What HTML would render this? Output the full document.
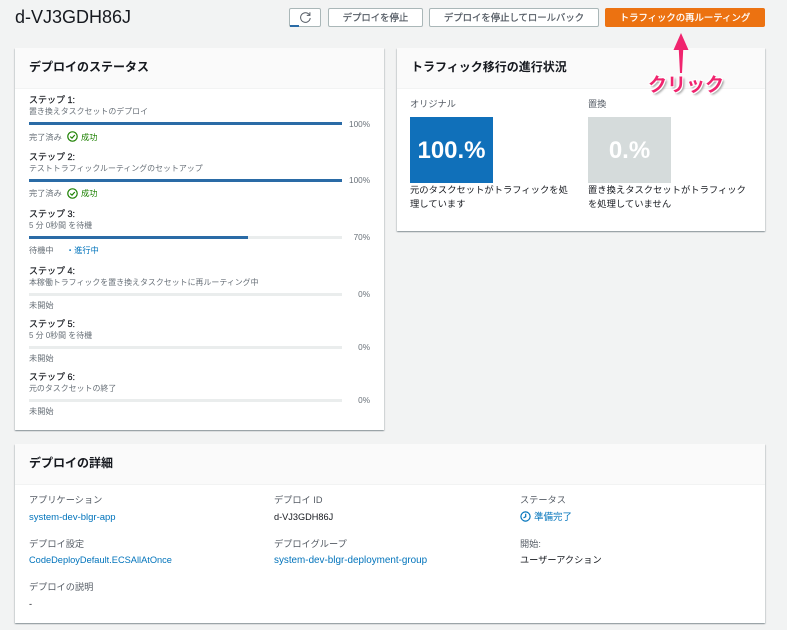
<!DOCTYPE html>
<html lang="ja"><head><meta charset="utf-8"><style>
html,body{margin:0;padding:0;background:#f2f3f3}
body{width:787px;height:630px;position:relative;overflow:hidden;font-family:"Liberation Sans","Noto Sans CJK JP",sans-serif;color:#16191f}
.t{position:absolute;white-space:nowrap;line-height:1.2}
.card{position:absolute;background:#fff;box-shadow:0 1px 1px 0 rgba(0,28,36,.3),1px 1px 1px 0 rgba(0,28,36,.1),-1px 1px 1px 0 rgba(0,28,36,.1)}
.hd{position:absolute;left:0;right:0;top:0;height:40px;background:#fafafa;border-bottom:1px solid #f2f3f3}
.btn{position:absolute;top:8px;height:17px;background:#fff;border:1px solid #aab7b8;border-radius:2px;font-size:9.4px;color:#545b64;text-align:center;line-height:18px;-webkit-text-stroke:.25px #545b64}
.s{font-size:9px;color:#16191f;-webkit-text-stroke:.2px #16191f}
.d{font-size:7.95px;color:#687078}
.l{font-size:8.2px;color:#687078}
.bar{position:absolute;left:29px;width:313px;height:3px;background:#eaeded}
.bar i{display:block;height:3px;background:#2a6ba6}
.p{font-size:8.2px;color:#687078;text-align:right;width:40px}
.g{font-size:8.2px;color:#1d8102}
.k{font-size:9.2px;color:#545b64}
.v{font-size:9.2px;color:#16191f}
.a{font-size:9.5px;color:#0073bb}
.h{font-size:12px;font-weight:700}
</style></head><body>
<div class="t" style="left:15px;top:7px;font-size:18px;color:#16191f">d-VJ3GDH86J</div>
<div class="btn" style="left:289px;width:30px"></div>
<div style="position:absolute;left:290px;top:25px;width:9px;height:2px;background:#2a6ba6"></div>
<svg style="position:absolute;left:299px;top:11px" width="13" height="13" viewBox="0 0 13 13" fill="none" stroke="#545b64" stroke-width="1"><path d="M10.6 4.2A4.8 4.8 0 1 0 11.2 7"/><path d="M10.9 1.2V4.4H7.8"/></svg>
<div class="btn" style="left:328px;width:93px">デプロイを停止</div>
<div class="btn" style="left:429px;width:168px">デプロイを停止してロールバック</div>
<div class="btn" style="left:605px;width:160px;height:19px;line-height:20px;background:#ec7211;border:0;color:#fff;-webkit-text-stroke:.25px #fff">トラフィックの再ルーティング</div>

<div class="card" style="left:15px;top:48px;width:369px;height:382px"><div class="hd"></div></div>
<div class="card" style="left:397px;top:48px;width:368px;height:183px"><div class="hd"></div></div>
<div class="card" style="left:15px;top:444px;width:750px;height:179px"><div class="hd"></div></div>

<div class="t h" style="left:29px;top:60px">デプロイのステータス</div>
<div class="t h" style="left:411px;top:60px">トラフィック移行の進行状況</div>
<div class="t h" style="left:29px;top:456px">デプロイの詳細</div>

<div class="t s" style="left:29px;top:95px">ステップ 1:</div>
<div class="t d" style="left:29px;top:107px">置き換えタスクセットのデプロイ</div>
<div class="bar" style="top:122px"><i style="width:100%"></i></div>
<div class="t p" style="left:330px;top:120px">100%</div>
<div class="t l" style="left:29px;top:133px">完了済み</div>
<svg style="position:absolute;left:67px;top:131px" width="11" height="11" viewBox="0 0 11 11" fill="none" stroke="#1d8102" stroke-width="1.2"><circle cx="5.5" cy="5.5" r="4.7"/><path d="M3.2 5.6L5 7.2L7.8 4"/></svg>
<div class="t g" style="left:81px;top:133px">成功</div>

<div class="t s" style="left:29px;top:152px">ステップ 2:</div>
<div class="t d" style="left:29px;top:164px">テストトラフィックルーティングのセットアップ</div>
<div class="bar" style="top:179px"><i style="width:100%"></i></div>
<div class="t p" style="left:330px;top:176px">100%</div>
<div class="t l" style="left:29px;top:189px">完了済み</div>
<svg style="position:absolute;left:67px;top:188px" width="11" height="11" viewBox="0 0 11 11" fill="none" stroke="#1d8102" stroke-width="1.2"><circle cx="5.5" cy="5.5" r="4.7"/><path d="M3.2 5.6L5 7.2L7.8 4"/></svg>
<div class="t g" style="left:81px;top:189px">成功</div>

<div class="t s" style="left:29px;top:209px">ステップ 3:</div>
<div class="t d" style="left:29px;top:221px">5 分 0秒間 を待機</div>
<div class="bar" style="top:236px"><i style="width:70%"></i></div>
<div class="t p" style="left:330px;top:233px">70%</div>
<div class="t l" style="left:29px;top:246px">待機中</div>
<div class="t a" style="left:66px;top:246px;font-size:8.2px">・進行中</div>

<div class="t s" style="left:29px;top:266px">ステップ 4:</div>
<div class="t d" style="left:29px;top:278px">本稼働トラフィックを置き換えタスクセットに再ルーティング中</div>
<div class="bar" style="top:293px"></div>
<div class="t p" style="left:330px;top:290px">0%</div>
<div class="t l" style="left:29px;top:301px">未開始</div>

<div class="t s" style="left:29px;top:319px">ステップ 5:</div>
<div class="t d" style="left:29px;top:331px">5 分 0秒間 を待機</div>
<div class="bar" style="top:346px"></div>
<div class="t p" style="left:330px;top:343px">0%</div>
<div class="t l" style="left:29px;top:354px">未開始</div>

<div class="t s" style="left:29px;top:372px">ステップ 6:</div>
<div class="t d" style="left:29px;top:384px">元のタスクセットの終了</div>
<div class="bar" style="top:399px"></div>
<div class="t p" style="left:330px;top:396px">0%</div>
<div class="t l" style="left:29px;top:407px">未開始</div>

<div class="t k" style="left:410px;top:99px">オリジナル</div>
<div class="t k" style="left:588px;top:99px">置換</div>
<div style="position:absolute;left:410px;top:117px;width:83px;height:66px;background:#1070ba"></div>
<div style="position:absolute;left:588px;top:117px;width:83px;height:66px;background:#d5dbdb"></div>
<div class="t" style="left:410px;top:118px;width:83px;text-align:center;font-size:24px;font-weight:700;color:#fff;line-height:66px">100.%</div>
<div class="t" style="left:588px;top:118px;width:83px;text-align:center;font-size:24px;font-weight:700;color:#fff;line-height:66px">0.%</div>
<div class="t" style="left:410px;top:183px;font-size:9.3px;line-height:14px;color:#16191f">元のタスクセットがトラフィックを処<br>理しています</div>
<div class="t" style="left:588px;top:183px;font-size:9.3px;line-height:14px;color:#16191f">置き換えタスクセットがトラフィック<br>を処理していません</div>

<svg style="position:absolute;left:672px;top:31px" width="18" height="44" viewBox="0 0 18 44"><path d="M9 2L16.500 19H11.200L10 42H8L6.800 19H1.500Z" fill="#f0246e"/></svg>
<div class="t" style="left:648px;top:75px;font-size:19px;font-weight:700;color:#f0246e;text-shadow:1px 1px 0 #fff,-1px -1px 0 #fff,1px -1px 0 #fff,-1px 1px 0 #fff,2px 2px 2px rgba(0,0,0,.4)">クリック</div>

<div class="t k" style="left:29px;top:495px">アプリケーション</div>
<div class="t a" style="left:29px;top:512px">system-dev-blgr-app</div>
<div class="t k" style="left:274px;top:495px">デプロイ ID</div>
<div class="t v" style="left:274px;top:512px">d-VJ3GDH86J</div>
<div class="t k" style="left:520px;top:495px">ステータス</div>
<svg style="position:absolute;left:520px;top:511px" width="11" height="11" viewBox="0 0 11 11" fill="none" stroke="#0073bb" stroke-width="1.2"><circle cx="5.5" cy="5.5" r="4.6"/><path d="M5.700 2.800V5.800L3.500 6.800"/></svg>
<div class="t a" style="left:534px;top:512px">準備完了</div>

<div class="t k" style="left:29px;top:539px">デプロイ設定</div>
<div class="t a" style="left:29px;top:555px;font-size:9.25px">CodeDeployDefault.ECSAllAtOnce</div>
<div class="t k" style="left:274px;top:539px">デプロイグループ</div>
<div class="t a" style="left:274px;top:555px;font-size:9.9px">system-dev-blgr-deployment-group</div>
<div class="t k" style="left:520px;top:539px">開始:</div>
<div class="t v" style="left:520px;top:555px">ユーザーアクション</div>

<div class="t k" style="left:29px;top:582px">デプロイの説明</div>
<div class="t v" style="left:29px;top:599px">-</div>
</body></html>
